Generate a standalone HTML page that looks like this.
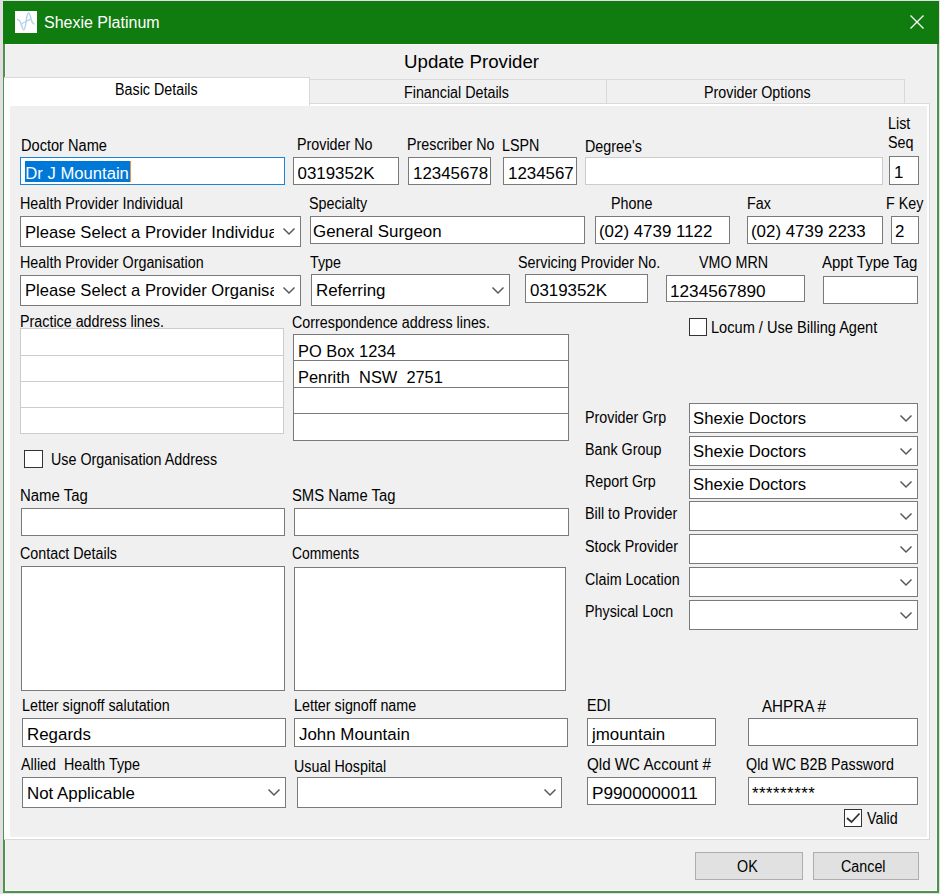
<!DOCTYPE html>
<html><head><meta charset="utf-8"><style>
html,body{margin:0;padding:0;width:940px;height:894px;overflow:hidden;background:#e6e6e6}
.a{position:absolute;box-sizing:border-box}
.t{position:absolute;white-space:pre;font-family:"Liberation Sans",sans-serif;line-height:normal;transform-origin:0 0}
</style></head><body>
<div class="a" style="left:0;top:0;width:940px;height:894px;background:#e4dde4"></div>
<div class="a" style="left:3px;top:1px;width:936px;height:892px;background:#f0f0f0;border:1px solid #4a954a;border-width:2px;"></div>
<div class="a" style="left:5px;top:44px;width:932px;height:847px;border:1px solid #faf6fa;"></div>
<div class="a" style="left:3px;top:1px;width:936px;height:43px;background:#107c10;"></div>
<div class="a" style="left:15px;top:11px;width:22px;height:22px;background:#ffffff;"></div>
<svg class="a" style="left:15px;top:11px" width="22" height="22" viewBox="0 0 22 22"><path d="M2,8.5 C4,8 5.5,11 6.5,14 C7.5,17 8,18.8 8.8,18.8 C10,18.8 10.5,15 11.3,9 C12,4 12.5,2 13.5,2 C14.8,2 15.5,6 16.5,9.5 C17.2,11.5 18,13 19.5,13" fill="none" stroke="#b4d4ea" stroke-width="1.5"/><path d="M6,13.5 C8,12 9.5,11 11,10.5 C12.5,10 14,9 15.5,8.3" fill="none" stroke="#b4d4ea" stroke-width="1.3"/></svg>
<div class="t" style="left:44px;top:14.12px;font-size:16px;color:#fff;">Shexie Platinum</div>
<svg class="a" style="left:909px;top:14px" width="16" height="16" viewBox="0 0 16 16"><path d="M1.5,1.5 L14.5,14.5 M14.5,1.5 L1.5,14.5" stroke="#fff" stroke-width="1.3"/></svg>
<div class="t" style="left:404px;top:51.08px;font-size:18.7px;color:#000;">Update Provider</div>
<div class="a" style="left:4px;top:103px;width:926px;height:737px;background:#ffffff;border:1px solid #dadada;border-left:none;"></div>
<div class="a" style="left:10px;top:106px;width:917px;height:731px;background:#f0f0f0;"></div>
<div class="a" style="left:309px;top:79px;width:298px;height:25px;background:#f0f0f0;border:1px solid #d9d9d9;"></div>
<div class="a" style="left:606px;top:79px;width:299px;height:25px;background:#f0f0f0;border:1px solid #d9d9d9;"></div>
<div class="a" style="left:4px;top:77px;width:306px;height:29px;background:#ffffff;border:1px solid #d9d9d9;border-bottom:none;border-left:none;"></div>
<div class="t" style="left:114.7px;top:81.32px;font-size:16px;transform:scaleX(0.894);color:#000;">Basic Details</div>
<div class="t" style="left:403.7px;top:83.82px;font-size:16px;transform:scaleX(0.894);color:#000;">Financial Details</div>
<div class="t" style="left:703.7px;top:83.82px;font-size:16px;transform:scaleX(0.894);color:#000;">Provider Options</div>
<div class="t" style="left:20.7px;top:136.82px;font-size:16px;transform:scaleX(0.91188);color:#000;">Doctor Name</div>
<div class="a" style="left:20px;top:157px;width:265px;height:28px;background:#fff;border:1px solid #1883d7;"></div>
<div class="a" style="left:25px;top:161px;width:105px;height:21px;background:#0078d7;"></div>
<div class="a" style="left:130px;top:161px;width:1px;height:21px;background:#f39340;"></div>
<div class="t" style="left:25.3px;top:163.53px;font-size:16.65px;color:#fff;">Dr J Mountain</div>
<div class="t" style="left:297.2px;top:135.82px;font-size:16px;transform:scaleX(0.894);color:#000;">Provider No</div>
<div class="a" style="left:293px;top:157px;width:106px;height:28px;background:#fff;border:1px solid #7a7a7a;"></div>
<div class="t" style="left:297.5px;top:163.71px;font-size:16.9px;color:#000;width:99.5px;overflow:hidden;">0319352K</div>
<div class="t" style="left:407.2px;top:135.82px;font-size:16px;transform:scaleX(0.894);color:#000;">Prescriber No</div>
<div class="a" style="left:408px;top:157px;width:83px;height:28px;background:#fff;border:1px solid #7a7a7a;"></div>
<div class="t" style="left:413px;top:163.71px;font-size:16.9px;color:#000;width:76px;overflow:hidden;">12345678</div>
<div class="t" style="left:502.2px;top:136.82px;font-size:16px;transform:scaleX(0.894);color:#000;">LSPN</div>
<div class="a" style="left:503px;top:157px;width:74px;height:28px;background:#fff;border:1px solid #7a7a7a;"></div>
<div class="t" style="left:508px;top:163.71px;font-size:16.9px;color:#000;width:67px;overflow:hidden;">1234567</div>
<div class="t" style="left:585.2px;top:137.82px;font-size:16px;transform:scaleX(0.894);color:#000;">Degree's</div>
<div class="a" style="left:585px;top:157px;width:298px;height:28px;background:#fff;border:1px solid #cccccc;"></div>
<div class="t" style="left:888.2px;top:115.32px;font-size:16px;transform:scaleX(0.894);color:#000;">List</div>
<div class="t" style="left:888.2px;top:134.32px;font-size:16px;transform:scaleX(0.894);color:#000;">Seq</div>
<div class="a" style="left:889px;top:156px;width:30px;height:29px;background:#fff;border:1px solid #7a7a7a;"></div>
<div class="t" style="left:894px;top:162.71px;font-size:16.9px;color:#000;width:23px;overflow:hidden;">1</div>
<div class="t" style="left:20.2px;top:194.82px;font-size:16px;transform:scaleX(0.894);color:#000;">Health Provider Individual</div>
<div class="a" style="left:20px;top:216px;width:281px;height:31px;background:#fff;border:1px solid #7a7a7a;"></div>
<div class="t" style="left:25px;top:222.98px;font-size:16.6px;color:#000;width:249px;overflow:hidden;">Please Select a Provider Individual</div>
<svg class="a" style="left:281.7px;top:226.1px" width="14" height="10" viewBox="0 0 14 10"><polyline points="1.5,2.5 7,8 12.5,2.5" fill="none" stroke="#585858" stroke-width="1.45"/></svg>
<div class="t" style="left:309.2px;top:194.82px;font-size:16px;transform:scaleX(0.894);color:#000;">Specialty</div>
<div class="a" style="left:310px;top:216px;width:275px;height:28px;background:#fff;border:1px solid #7a7a7a;"></div>
<div class="t" style="left:313px;top:222.21px;font-size:16.9px;color:#000;width:270px;overflow:hidden;">General Surgeon</div>
<div class="t" style="left:611.2px;top:194.82px;font-size:16px;transform:scaleX(0.894);color:#000;">Phone</div>
<div class="a" style="left:595px;top:216px;width:135px;height:28px;background:#fff;border:1px solid #7a7a7a;"></div>
<div class="t" style="left:599px;top:222.21px;font-size:16.9px;color:#000;width:129px;overflow:hidden;">(02) 4739 1122</div>
<div class="t" style="left:747.2px;top:194.82px;font-size:16px;transform:scaleX(0.894);color:#000;">Fax</div>
<div class="a" style="left:747px;top:216px;width:136px;height:28px;background:#fff;border:1px solid #7a7a7a;"></div>
<div class="t" style="left:751px;top:222.21px;font-size:16.9px;color:#000;width:130px;overflow:hidden;">(02) 4739 2233</div>
<div class="t" style="left:886.2px;top:194.82px;font-size:16px;transform:scaleX(0.894);color:#000;">F Key</div>
<div class="a" style="left:891px;top:216px;width:28px;height:28px;background:#fff;border:1px solid #7a7a7a;"></div>
<div class="t" style="left:895px;top:222.21px;font-size:16.9px;color:#000;width:22px;overflow:hidden;">2</div>
<div class="t" style="left:20.2px;top:254.02px;font-size:16px;transform:scaleX(0.894);color:#000;">Health Provider Organisation</div>
<div class="a" style="left:20px;top:275px;width:281px;height:31px;background:#fff;border:1px solid #7a7a7a;"></div>
<div class="t" style="left:25px;top:281.48px;font-size:16.6px;color:#000;width:249px;overflow:hidden;">Please Select a Provider Organisation</div>
<svg class="a" style="left:281.7px;top:285.1px" width="14" height="10" viewBox="0 0 14 10"><polyline points="1.5,2.5 7,8 12.5,2.5" fill="none" stroke="#585858" stroke-width="1.45"/></svg>
<div class="t" style="left:310.2px;top:254.02px;font-size:16px;transform:scaleX(0.894);color:#000;">Type</div>
<div class="a" style="left:311px;top:274px;width:199px;height:32px;background:#fff;border:1px solid #7a7a7a;"></div>
<div class="t" style="left:316px;top:280.71px;font-size:16.9px;color:#000;">Referring</div>
<svg class="a" style="left:490.7px;top:284.6px" width="14" height="10" viewBox="0 0 14 10"><polyline points="1.5,2.5 7,8 12.5,2.5" fill="none" stroke="#585858" stroke-width="1.45"/></svg>
<div class="t" style="left:518.2px;top:254.02px;font-size:16px;transform:scaleX(0.894);color:#000;">Servicing Provider No.</div>
<div class="a" style="left:525px;top:274px;width:123px;height:29px;background:#fff;border:1px solid #7a7a7a;"></div>
<div class="t" style="left:530px;top:280.71px;font-size:16.9px;color:#000;width:116px;overflow:hidden;">0319352K</div>
<div class="t" style="left:699.2px;top:254.02px;font-size:16px;transform:scaleX(0.894);color:#000;">VMO MRN</div>
<div class="a" style="left:666px;top:275px;width:139px;height:27px;background:#fff;border:1px solid #7a7a7a;"></div>
<div class="t" style="left:670px;top:280.73px;font-size:17.2px;color:#000;width:133px;overflow:hidden;">1234567890</div>
<div class="t" style="left:822.2px;top:254.02px;font-size:16px;transform:scaleX(0.9387000000000001);color:#000;">Appt Type Tag</div>
<div class="a" style="left:823px;top:276px;width:95px;height:28px;background:#fff;border:1px solid #7a7a7a;"></div>
<div class="t" style="left:20.2px;top:313.32px;font-size:16px;transform:scaleX(0.894);color:#000;">Practice address lines.</div>
<div class="a" style="left:20px;top:328px;width:264px;height:28px;background:#fff;border:1px solid #cccccc;"></div>
<div class="a" style="left:20px;top:355px;width:264px;height:27px;background:#fff;border:1px solid #cccccc;"></div>
<div class="a" style="left:20px;top:381px;width:264px;height:27px;background:#fff;border:1px solid #cccccc;"></div>
<div class="a" style="left:20px;top:407px;width:264px;height:27px;background:#fff;border:1px solid #cccccc;"></div>
<div class="t" style="left:292.2px;top:313.82px;font-size:16px;transform:scaleX(0.894);color:#000;">Correspondence address lines.</div>
<div class="a" style="left:293px;top:334px;width:276px;height:27px;background:#fff;border:1px solid #7a7a7a;"></div>
<div class="t" style="left:298px;top:341.66px;font-size:16.4px;color:#000;">PO Box 1234</div>
<div class="a" style="left:293px;top:360px;width:276px;height:28px;background:#fff;border:1px solid #7a7a7a;"></div>
<div class="t" style="left:298px;top:367.66px;font-size:16.4px;color:#000;">Penrith&nbsp; NSW&nbsp; 2751</div>
<div class="a" style="left:293px;top:387px;width:276px;height:27px;background:#fff;border:1px solid #7a7a7a;"></div>
<div class="a" style="left:293px;top:413px;width:276px;height:28px;background:#fff;border:1px solid #7a7a7a;"></div>
<div class="a" style="left:689px;top:318px;width:18px;height:18px;background:#fff;border:1px solid #333333;border-width:1.5px;"></div>
<div class="t" style="left:711.2px;top:319.02px;font-size:16px;transform:scaleX(0.91188);color:#000;">Locum / Use Billing Agent</div>
<div class="a" style="left:24px;top:450px;width:19px;height:18px;background:#fff;border:1px solid #333333;border-width:1.5px;"></div>
<div class="t" style="left:50.7px;top:451.32px;font-size:16px;transform:scaleX(0.894);color:#000;">Use Organisation Address</div>
<div class="t" style="left:585.2px;top:408.82px;font-size:16px;transform:scaleX(0.894);color:#000;">Provider Grp</div>
<div class="a" style="left:689px;top:403px;width:229px;height:30px;background:#fff;border:1px solid #7a7a7a;"></div>
<div class="t" style="left:693px;top:408.89px;font-size:16.7px;color:#000;">Shexie Doctors</div>
<svg class="a" style="left:898.7px;top:412.6px" width="14" height="10" viewBox="0 0 14 10"><polyline points="1.5,2.5 7,8 12.5,2.5" fill="none" stroke="#585858" stroke-width="1.45"/></svg>
<div class="t" style="left:585.2px;top:440.82px;font-size:16px;transform:scaleX(0.894);color:#000;">Bank Group</div>
<div class="a" style="left:689px;top:436px;width:229px;height:30px;background:#fff;border:1px solid #7a7a7a;"></div>
<div class="t" style="left:693px;top:441.89px;font-size:16.7px;color:#000;">Shexie Doctors</div>
<svg class="a" style="left:898.7px;top:445.6px" width="14" height="10" viewBox="0 0 14 10"><polyline points="1.5,2.5 7,8 12.5,2.5" fill="none" stroke="#585858" stroke-width="1.45"/></svg>
<div class="t" style="left:585.2px;top:472.82px;font-size:16px;transform:scaleX(0.894);color:#000;">Report Grp</div>
<div class="a" style="left:689px;top:469px;width:229px;height:30px;background:#fff;border:1px solid #7a7a7a;"></div>
<div class="t" style="left:693px;top:474.89px;font-size:16.7px;color:#000;">Shexie Doctors</div>
<svg class="a" style="left:898.7px;top:478.6px" width="14" height="10" viewBox="0 0 14 10"><polyline points="1.5,2.5 7,8 12.5,2.5" fill="none" stroke="#585858" stroke-width="1.45"/></svg>
<div class="t" style="left:585.2px;top:505.32px;font-size:16px;transform:scaleX(0.894);color:#000;">Bill to Provider</div>
<div class="a" style="left:689px;top:501px;width:229px;height:30px;background:#fff;border:1px solid #7a7a7a;"></div>
<svg class="a" style="left:898.7px;top:510.6px" width="14" height="10" viewBox="0 0 14 10"><polyline points="1.5,2.5 7,8 12.5,2.5" fill="none" stroke="#585858" stroke-width="1.45"/></svg>
<div class="t" style="left:585.2px;top:537.82px;font-size:16px;transform:scaleX(0.894);color:#000;">Stock Provider</div>
<div class="a" style="left:689px;top:534px;width:229px;height:30px;background:#fff;border:1px solid #7a7a7a;"></div>
<svg class="a" style="left:898.7px;top:543.6px" width="14" height="10" viewBox="0 0 14 10"><polyline points="1.5,2.5 7,8 12.5,2.5" fill="none" stroke="#585858" stroke-width="1.45"/></svg>
<div class="t" style="left:585.2px;top:570.82px;font-size:16px;transform:scaleX(0.894);color:#000;">Claim Location</div>
<div class="a" style="left:689px;top:567px;width:229px;height:30px;background:#fff;border:1px solid #7a7a7a;"></div>
<svg class="a" style="left:898.7px;top:576.6px" width="14" height="10" viewBox="0 0 14 10"><polyline points="1.5,2.5 7,8 12.5,2.5" fill="none" stroke="#585858" stroke-width="1.45"/></svg>
<div class="t" style="left:585.2px;top:603.32px;font-size:16px;transform:scaleX(0.894);color:#000;">Physical Locn</div>
<div class="a" style="left:689px;top:600px;width:229px;height:30px;background:#fff;border:1px solid #7a7a7a;"></div>
<svg class="a" style="left:898.7px;top:609.6px" width="14" height="10" viewBox="0 0 14 10"><polyline points="1.5,2.5 7,8 12.5,2.5" fill="none" stroke="#585858" stroke-width="1.45"/></svg>
<div class="t" style="left:20.2px;top:486.82px;font-size:16px;transform:scaleX(0.93423);color:#000;">Name Tag</div>
<div class="a" style="left:21px;top:508px;width:264px;height:28px;background:#fff;border:1px solid #7a7a7a;"></div>
<div class="t" style="left:292.2px;top:486.82px;font-size:16px;transform:scaleX(0.92529);color:#000;">SMS Name Tag</div>
<div class="a" style="left:294px;top:508px;width:275px;height:28px;background:#fff;border:1px solid #7a7a7a;"></div>
<div class="t" style="left:20.2px;top:545.22px;font-size:16px;transform:scaleX(0.894);color:#000;">Contact Details</div>
<div class="a" style="left:21px;top:566px;width:264px;height:125px;background:#fff;border:1px solid #7a7a7a;"></div>
<div class="t" style="left:292.2px;top:545.02px;font-size:16px;transform:scaleX(0.86718);color:#000;">Comments</div>
<div class="a" style="left:294px;top:567px;width:272px;height:124px;background:#fff;border:1px solid #7a7a7a;"></div>
<div class="t" style="left:22.2px;top:696.82px;font-size:16px;transform:scaleX(0.894);color:#000;">Letter signoff salutation</div>
<div class="a" style="left:22px;top:718px;width:264px;height:29px;background:#fff;border:1px solid #7a7a7a;"></div>
<div class="t" style="left:27px;top:724.71px;font-size:16.9px;color:#000;width:257px;overflow:hidden;">Regards</div>
<div class="t" style="left:294.2px;top:697.12px;font-size:16px;transform:scaleX(0.894);color:#000;">Letter signoff name</div>
<div class="a" style="left:294px;top:718px;width:274px;height:29px;background:#fff;border:1px solid #7a7a7a;"></div>
<div class="t" style="left:299px;top:724.71px;font-size:16.9px;color:#000;width:267px;overflow:hidden;">John Mountain</div>
<div class="t" style="left:586.5px;top:697.32px;font-size:16px;transform:scaleX(0.894);color:#000;">EDI</div>
<div class="a" style="left:587px;top:718px;width:129px;height:28px;background:#fff;border:1px solid #7a7a7a;"></div>
<div class="t" style="left:592px;top:724.71px;font-size:16.9px;color:#000;width:122px;overflow:hidden;">jmountain</div>
<div class="t" style="left:761.7px;top:697.82px;font-size:16px;transform:scaleX(0.94764);color:#000;">AHPRA #</div>
<div class="a" style="left:748px;top:718px;width:170px;height:28px;background:#fff;border:1px solid #7a7a7a;"></div>
<div class="t" style="left:21.2px;top:755.82px;font-size:16px;transform:scaleX(0.894);color:#000;">Allied&nbsp; Health Type</div>
<div class="a" style="left:22px;top:777px;width:264px;height:31px;background:#fff;border:1px solid #7a7a7a;"></div>
<div class="t" style="left:27px;top:783.71px;font-size:16.9px;color:#000;">Not Applicable</div>
<svg class="a" style="left:266.7px;top:787.1px" width="14" height="10" viewBox="0 0 14 10"><polyline points="1.5,2.5 7,8 12.5,2.5" fill="none" stroke="#585858" stroke-width="1.45"/></svg>
<div class="t" style="left:294.2px;top:758.42px;font-size:16px;transform:scaleX(0.894);color:#000;">Usual Hospital</div>
<div class="a" style="left:297px;top:777px;width:265px;height:31px;background:#fff;border:1px solid #7a7a7a;"></div>
<svg class="a" style="left:542.7px;top:787.1px" width="14" height="10" viewBox="0 0 14 10"><polyline points="1.5,2.5 7,8 12.5,2.5" fill="none" stroke="#585858" stroke-width="1.45"/></svg>
<div class="t" style="left:586.5px;top:755.62px;font-size:16px;transform:scaleX(0.94764);color:#000;">Qld WC Account #</div>
<div class="a" style="left:587px;top:777px;width:129px;height:28px;background:#fff;border:1px solid #7a7a7a;"></div>
<div class="t" style="left:592px;top:783.43px;font-size:17.2px;color:#000;width:122px;overflow:hidden;">P9900000011</div>
<div class="t" style="left:746.2px;top:755.62px;font-size:16px;transform:scaleX(0.894);color:#000;">Qld WC B2B Password</div>
<div class="a" style="left:748px;top:777px;width:170px;height:28px;background:#fff;border:1px solid #7a7a7a;"></div>
<div class="t" style="left:752px;top:783.71px;font-size:16.9px;color:#000;letter-spacing:0.45px;">*********</div>
<div class="a" style="left:844px;top:809px;width:18px;height:18px;background:#fff;border:1px solid #333333;border-width:1.5px;"></div>
<svg class="a" style="left:844px;top:809px" width="18" height="18" viewBox="0 0 18 18"><polyline points="3,9 7.5,13 15.5,4.5" fill="none" stroke="#333" stroke-width="1.8"/></svg>
<div class="t" style="left:866.7px;top:809.82px;font-size:16px;transform:scaleX(0.894);color:#000;">Valid</div>
<div class="a" style="left:695px;top:852px;width:108px;height:28px;background:#e1e1e1;border:1px solid #adadad;"></div>
<div class="t" style="left:736.7px;top:858.32px;font-size:16px;transform:scaleX(0.894);color:#000;">OK</div>
<div class="a" style="left:813px;top:852px;width:106px;height:28px;background:#e1e1e1;border:1px solid #adadad;"></div>
<div class="t" style="left:841.2px;top:858.32px;font-size:16px;transform:scaleX(0.894);color:#000;">Cancel</div>
</body></html>
